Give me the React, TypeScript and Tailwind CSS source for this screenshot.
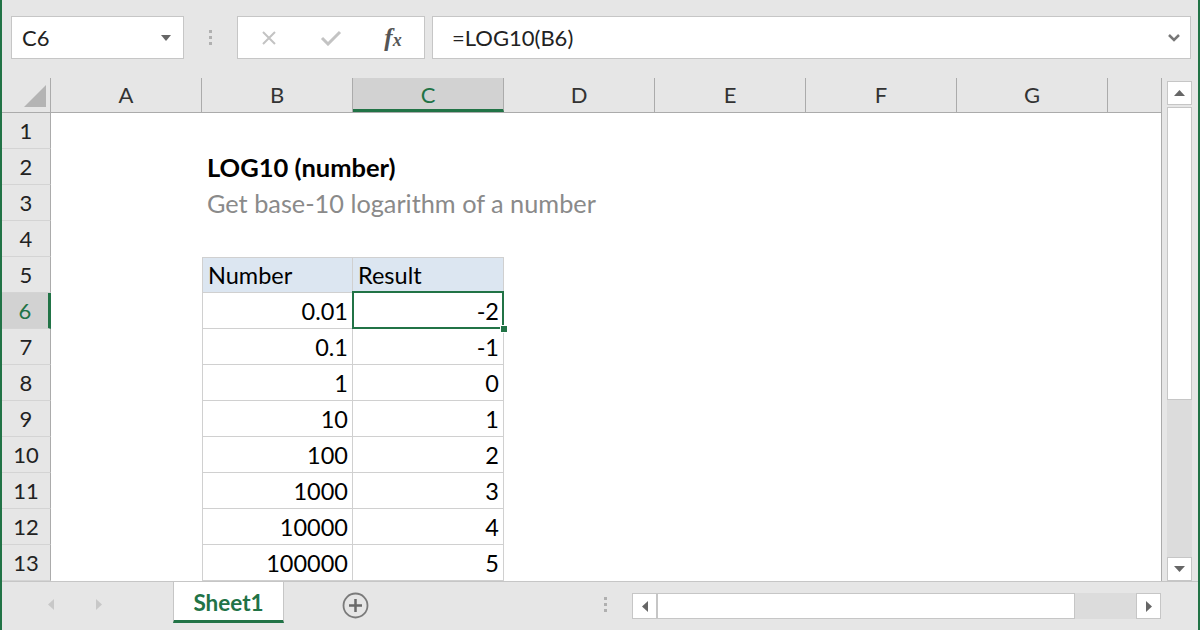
import React from 'react'

const COLS = ['A', 'B', 'C', 'D', 'E', 'F', 'G']

const table: [string, string][] = [
  ['0.01', '-2'],
  ['0.1', '-1'],
  ['1', '0'],
  ['10', '1'],
  ['100', '2'],
  ['1000', '3'],
  ['10000', '4'],
  ['100000', '5'],
]

const font = { fontFamily: 'Lato, "Liberation Sans", sans-serif' }

function RowHeader({ n, active }: { n: number; active?: boolean }) {
  return (
    <div
      className={`w-[49px] h-[36px] shrink-0 flex items-center justify-center border-b border-b-[#d4d4d4] text-[22px] leading-none ${
        active
          ? 'bg-[#d2d2d2] text-[#217346] border-r-[3px] border-r-[#217346]'
          : 'bg-[#e6e6e6] text-[#222] border-r border-r-[#ababab]'
      }`}
    >
      {n}
    </div>
  )
}

function SheetRow({ n }: { n: number }) {
  const inTable = n >= 5 && n <= 13
  const data = n >= 6 ? table[n - 6] : null
  const tb = inTable ? 'border-b border-r border-[#d0d0d0]' : ''
  const head = n === 5 ? 'bg-[#dce6f1] border-t' : ''

  return (
    <div className="flex h-[36px]">
      <RowHeader n={n} active={n === 6} />
      {/* A */}
      <div className="w-[151px] shrink-0" />
      {/* B */}
      <div className={`w-[151px] shrink-0 flex items-center pt-[2px] whitespace-nowrap text-[23.5px] leading-none ${tb} ${inTable ? 'border-l' : ''} ${head} ${data ? 'justify-end pr-[4px]' : 'pl-[5px]'}`}>
        {n === 2 && <span className="font-bold text-black text-[25.5px]">LOG10 (number)</span>}
        {n === 3 && <span className="text-[#8a8a8a] text-[25.3px]">Get base-10 logarithm of a number</span>}
        {n === 5 && <span className="text-black">Number</span>}
        {data && <span className="text-black">{data[0]}</span>}
      </div>
      {/* C */}
      <div className={`relative w-[151px] shrink-0 flex items-center pt-[2px] whitespace-nowrap text-[23.5px] leading-none ${tb} ${head} ${data ? 'justify-end pr-[4px]' : 'pl-[5px]'}`}>
        {n === 5 && <span className="text-black">Result</span>}
        {data && <span className="text-black">{data[1]}</span>}
        {n === 6 && (
          <>
            <div className="absolute -left-[1px] -top-[2px] -right-[1px] -bottom-[1px] border-2 border-[#217346] z-10" />
            <div className="absolute -right-[5px] -bottom-[5px] w-[8px] h-[8px] bg-[#217346] border border-white z-20" />
          </>
        )}
      </div>
      <div className="flex-1" />
    </div>
  )
}

export default function App() {
  return (
    <div
      className="w-[1200px] h-[630px] bg-[#e6e6e6] border-x-2 border-[#217346] flex flex-col overflow-hidden"
      style={font}
    >
      {/* formula bar */}
      <div className="h-[78px] shrink-0 flex items-start pt-[16px] pl-[9px] pr-[7px]">
        <div className="w-[173px] h-[43px] bg-white border border-[#c6c6c6] flex items-center justify-between pl-[10px] pr-[12px]">
          <span className="text-[22px] text-[#222] leading-none">C6</span>
          <svg width="10" height="6" viewBox="0 0 10 6">
            <path d="M0 0 L10 0 L5 6 Z" fill="#666" />
          </svg>
        </div>
        <div className="w-[53px] h-[43px] flex flex-col items-center justify-center gap-[3px]">
          <div className="w-[3px] h-[3px] bg-[#b0b0b0]" />
          <div className="w-[3px] h-[3px] bg-[#b0b0b0]" />
          <div className="w-[3px] h-[3px] bg-[#b0b0b0]" />
        </div>
        <div className="w-[188px] h-[43px] bg-white border border-[#c6c6c6] flex items-center">
          <div className="w-[62px] flex justify-center">
            <svg width="16" height="16" viewBox="0 0 16 16">
              <path d="M2 2 L14 14 M14 2 L2 14" stroke="#c3c3c3" strokeWidth="2" />
            </svg>
          </div>
          <div className="w-[62px] flex justify-center">
            <svg width="22" height="16" viewBox="0 0 22 16">
              <path d="M2 8 L8 14 L20 2" stroke="#c3c3c3" strokeWidth="3" fill="none" />
            </svg>
          </div>
          <div className="w-[62px] flex justify-center">
            <span className="italic font-bold text-[#555] text-[25px] leading-none" style={{ fontFamily: '"Liberation Serif", serif' }}>
              f<span className="text-[18px]">x</span>
            </span>
          </div>
        </div>
        <div className="ml-[7px] flex-1 h-[43px] bg-white border border-[#c6c6c6] flex items-center justify-between pl-[19px] pr-[10px]">
          <span className="text-[22px] text-[#222] leading-none">=LOG10(B6)</span>
          <svg width="12" height="8" viewBox="0 0 12 8">
            <path d="M1 1 L6 6 L11 1" stroke="#777" strokeWidth="2.5" fill="none" />
          </svg>
        </div>
      </div>

      {/* grid + vertical scrollbar */}
      <div className="h-[503px] shrink-0 flex">
        <div className="w-[1160px] shrink-0 flex flex-col bg-white border-r border-[#ababab]">
          <div className="flex h-[35px] shrink-0 bg-[#e6e6e6] border-b border-[#ababab]">
            <div className="w-[49px] shrink-0 border-r border-[#ababab] flex items-end justify-end pr-[4px] pb-[5px]">
              <svg width="22" height="22" viewBox="0 0 22 22">
                <path d="M22 0 L22 22 L0 22 Z" fill="#b4b4b4" />
              </svg>
            </div>
            {COLS.map((c) => (
              <div
                key={c}
                className={`w-[151px] shrink-0 flex items-center justify-center text-[22px] leading-none ${
                  c === 'C'
                    ? 'bg-[#d2d2d2] text-[#217346] border-b-[3px] border-b-[#217346] border-r border-r-[#ababab] pt-[3px]'
                    : 'text-[#333] border-r border-[#ababab]'
                }`}
              >
                {c}
              </div>
            ))}
            <div className="flex-1" />
          </div>
          {Array.from({ length: 13 }, (_, i) => (
            <SheetRow key={i} n={i + 1} />
          ))}
        </div>
        <div className="ml-[5px] w-[25px] flex flex-col pt-[3px]">
          <div className="h-[24px] bg-white border border-[#c6c6c6] flex items-center justify-center">
            <svg width="11" height="6" viewBox="0 0 11 6">
              <path d="M0 6 L11 6 L5.5 0 Z" fill="#666" />
            </svg>
          </div>
          <div className="mt-[2px] h-[293px] bg-white border border-[#c6c6c6]" />
          <div className="flex-1 bg-[#dcdcdc]" />
          <div className="h-[24px] bg-white border border-[#c6c6c6] flex items-center justify-center">
            <svg width="11" height="6" viewBox="0 0 11 6">
              <path d="M0 0 L11 0 L5.5 6 Z" fill="#666" />
            </svg>
          </div>
        </div>
      </div>

      {/* sheet tabs */}
      <div className="flex-1 flex items-start border-t border-[#c6c6c6]">
        <div className="w-[171px] h-[44px] flex items-center">
          <svg className="ml-[46px]" width="6" height="11" viewBox="0 0 6 11">
            <path d="M6 0 L6 11 L0 5.5 Z" fill="#c8c8c8" />
          </svg>
          <svg className="ml-[42px]" width="6" height="11" viewBox="0 0 6 11">
            <path d="M0 0 L0 11 L6 5.5 Z" fill="#c8c8c8" />
          </svg>
        </div>
        <div className="w-[111px] h-[41px] bg-white border-x border-[#c6c6c6] border-b-[3px] border-b-[#217346] flex items-center justify-center pt-[4px]">
          <span className="font-bold text-[22.5px] text-[#217346] leading-none">Sheet1</span>
        </div>
        <div className="ml-[58px] mt-[10px]">
          <svg width="27" height="27" viewBox="0 0 27 27">
            <circle cx="13.5" cy="13.5" r="12" stroke="#7a7a7a" strokeWidth="1.8" fill="none" />
            <path d="M13.5 7 V20 M7 13.5 H20" stroke="#6a6a6a" strokeWidth="2.5" />
          </svg>
        </div>
        <div className="ml-[235px] mt-[15px] flex flex-col gap-[3px]">
          <div className="w-[3px] h-[3px] bg-[#b0b0b0]" />
          <div className="w-[3px] h-[3px] bg-[#b0b0b0]" />
          <div className="w-[3px] h-[3px] bg-[#b0b0b0]" />
        </div>
        <div className="ml-[25px] mt-[11px] h-[26px] flex">
          <div className="w-[25px] bg-white border border-[#c6c6c6] flex items-center justify-center">
            <svg width="6" height="11" viewBox="0 0 6 11">
              <path d="M6 0 L6 11 L0 5.5 Z" fill="#666" />
            </svg>
          </div>
          <div className="w-[418px] bg-white border border-[#c6c6c6]" />
          <div className="w-[61px] bg-[#dcdcdc]" />
          <div className="w-[25px] bg-white border border-[#c6c6c6] flex items-center justify-center">
            <svg width="6" height="11" viewBox="0 0 6 11">
              <path d="M0 0 L0 11 L6 5.5 Z" fill="#666" />
            </svg>
          </div>
        </div>
      </div>
    </div>
  )
}
